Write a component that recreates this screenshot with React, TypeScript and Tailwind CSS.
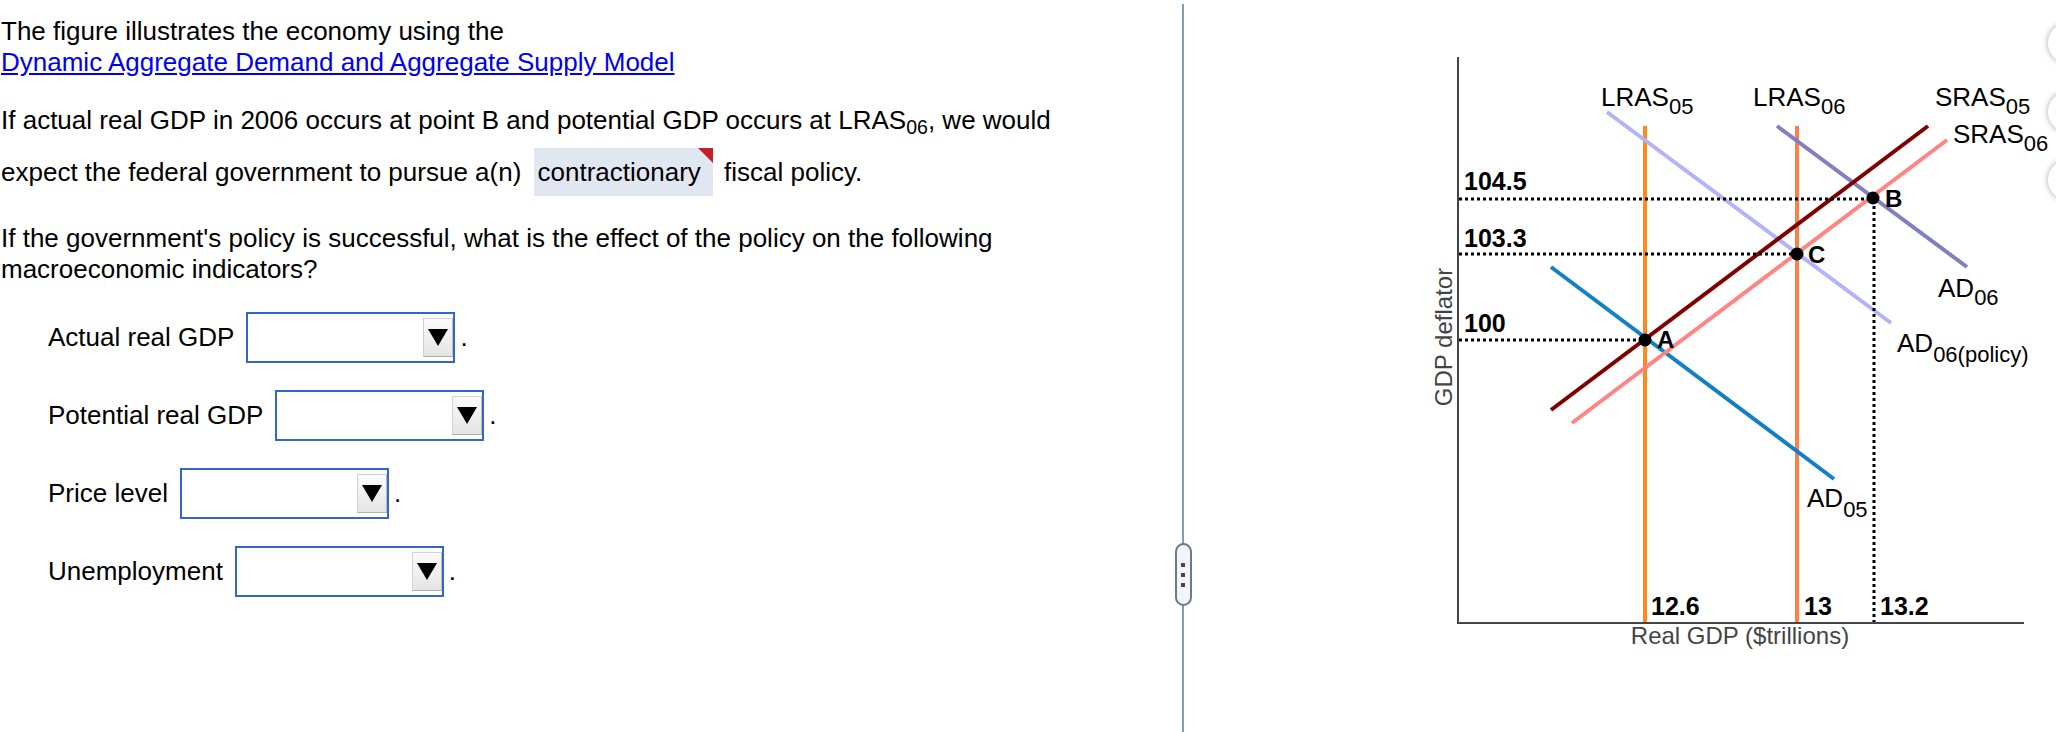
import React from 'react';

const font = { fontFamily: '"Liberation Sans", Arial, sans-serif' };

const indicators = ['Actual real GDP', 'Potential real GDP', 'Price level', 'Unemployment'];

function Dropdown() {
  return (
    <div className="flex h-[51px] w-[209px] items-center justify-end border-2 border-[#3366cc] bg-white">
      <div className="flex h-[39px] w-[30px] items-center justify-center border border-[#d2d2d2] border-b-[#b0b0b0] border-r-[#bdbdbd] bg-linear-to-b from-[#fbfbfb] to-[#e4e4e4]">
        <svg width="20" height="17" viewBox="0 0 20 17">
          <path d="M0 0 H20 L10 17 Z" fill="#000" />
        </svg>
      </div>
    </div>
  );
}

function Graph() {
  const dotted = { stroke: '#000', strokeWidth: 3, strokeDasharray: '3 3' };
  return (
    <svg width="872" height="732" viewBox="1184 0 872 732" style={font}>
      {/* axes */}
      <line x1="1458" y1="57" x2="1458" y2="624" stroke="#444" strokeWidth="2" />
      <line x1="1457" y1="623" x2="2024" y2="623" stroke="#444" strokeWidth="2" />

      {/* long run supply */}
      <line x1="1645" y1="126" x2="1645" y2="622" stroke="#ff8a1c" strokeWidth="4" />
      <line x1="1797" y1="126" x2="1797" y2="622" stroke="#fd7f4a" strokeWidth="4" />

      {/* demand + short run supply */}
      <line x1="1551" y1="267" x2="1834" y2="479" stroke="#1280c4" strokeWidth="4" />
      <line x1="1607" y1="112" x2="1891" y2="323" stroke="#b3b3fa" strokeWidth="4" />
      <line x1="1777" y1="126" x2="1967" y2="267" stroke="#8080c0" strokeWidth="4" />
      <line x1="1551" y1="410" x2="1928" y2="126" stroke="#800000" strokeWidth="4" />
      <line x1="1572" y1="423" x2="1947" y2="140" stroke="#ff8585" strokeWidth="4" />

      {/* guides */}
      <line x1="1459" y1="199" x2="1873" y2="199" style={dotted} />
      <line x1="1459" y1="254" x2="1797" y2="254" style={dotted} />
      <line x1="1459" y1="340" x2="1645" y2="340" style={dotted} />
      <line x1="1874" y1="200" x2="1874" y2="622" style={dotted} />

      {/* equilibrium points */}
      <circle cx="1645" cy="340" r="6.5" fill="#000" />
      <circle cx="1797" cy="254" r="6.5" fill="#000" />
      <circle cx="1873" cy="198" r="6.5" fill="#000" />

      <g fontWeight="bold" fontSize="24" fill="#000">
        <text x="1657" y="348">A</text>
        <text x="1885" y="207">B</text>
        <text x="1808" y="263">C</text>
      </g>

      <g fontWeight="bold" fontSize="25" fill="#000">
        <text x="1464" y="190">104.5</text>
        <text x="1464" y="247">103.3</text>
        <text x="1464" y="332">100</text>
        <text x="1651" y="615">12.6</text>
        <text x="1804" y="615">13</text>
        <text x="1880" y="615">13.2</text>
      </g>

      <g fontSize="26" fill="#000">
        <text x="1601" y="106">LRAS<tspan fontSize="22" dy="8">05</tspan></text>
        <text x="1753" y="106">LRAS<tspan fontSize="22" dy="8">06</tspan></text>
        <text x="1935" y="106">SRAS<tspan fontSize="22" dy="8">05</tspan></text>
        <text x="1953" y="143">SRAS<tspan fontSize="22" dy="8">06</tspan></text>
        <text x="1938" y="297">AD<tspan fontSize="22" dy="8">06</tspan></text>
        <text x="1897" y="352">AD<tspan fontSize="22" dy="10">06(policy)</tspan></text>
        <text x="1807" y="507">AD<tspan fontSize="22" dy="10">05</tspan></text>
      </g>

      <text x="1740" y="644" fontSize="24" fill="#444" textAnchor="middle">Real GDP ($trillions)</text>
      <text x="1452" y="337" fontSize="24" fill="#444" textAnchor="middle" transform="rotate(-90 1452 337)">GDP deflator</text>
    </svg>
  );
}

export default function App() {
  return (
    <div className="relative flex h-[732px] w-[2056px] overflow-hidden bg-white text-black" style={font}>
      {/* question side */}
      <div className="w-[1182px] shrink-0 pl-[1px] pt-[16px] text-[26px] leading-[31px]">
        <div className="w-[1100px]">
          <p>
            The figure illustrates the economy using the
            <br />
            <a href="#" className="text-[#0000ee] underline">Dynamic Aggregate Demand and Aggregate Supply Model</a>
          </p>
          <p className="mt-[27px]">
            If actual real GDP in 2006 occurs at point B and potential GDP occurs at LRAS<sub>06</sub>, we would expect the federal government to pursue a(n){' '}
            <span className="relative ml-[5px] mr-[4px] mt-[12px] inline-block bg-[#e1e7f0] py-[8.5px] pl-[4px] pr-[12px]">
              contractionary
              <span className="absolute right-0 top-0 h-0 w-0 border-l-[15px] border-t-[15px] border-l-transparent border-t-[#c4202b]" />
            </span>{' '}
            fiscal policy.
          </p>
          <p className="mt-[27px]">
            If the government's policy is successful, what is the effect of the policy on the following macroeconomic indicators?
          </p>
          <div className="mt-[27px] flex flex-col gap-[27px] pl-[47px]">
            {indicators.map((label) => (
              <div key={label} className="flex items-center">
                <span>{label}</span>
                <div className="ml-[12px]">
                  <Dropdown />
                </div>
                <span className="ml-[5px]">.</span>
              </div>
            ))}
          </div>
        </div>
      </div>

      {/* splitter */}
      <div className="relative mt-[4px] w-[2px] shrink-0 bg-[#8a9aae]">
        <div className="absolute left-[-7.5px] top-[539px] flex h-[63px] w-[17px] flex-col items-center justify-center gap-[6px] rounded-full border-2 border-[#6b7b8e] bg-[#f2f4f7]">
          <span className="h-[4px] w-[4px] bg-[#444]" />
          <span className="h-[4px] w-[4px] bg-[#444]" />
          <span className="h-[4px] w-[4px] bg-[#444]" />
        </div>
      </div>

      {/* figure side */}
      <div className="flex-1">
        <Graph />
      </div>

      {/* side toolbar buttons, mostly off screen */}
      <div className="absolute left-[2048px] top-[23px] h-[40px] w-[40px] rounded-full bg-white shadow-[0_0_6px_rgba(0,0,0,0.35)]" />
      <div className="absolute left-[2048px] top-[92px] h-[40px] w-[40px] rounded-full bg-white shadow-[0_0_6px_rgba(0,0,0,0.35)]" />
      <div className="absolute left-[2048px] top-[160px] h-[40px] w-[40px] rounded-full bg-white shadow-[0_0_6px_rgba(0,0,0,0.35)]" />
    </div>
  );
}
